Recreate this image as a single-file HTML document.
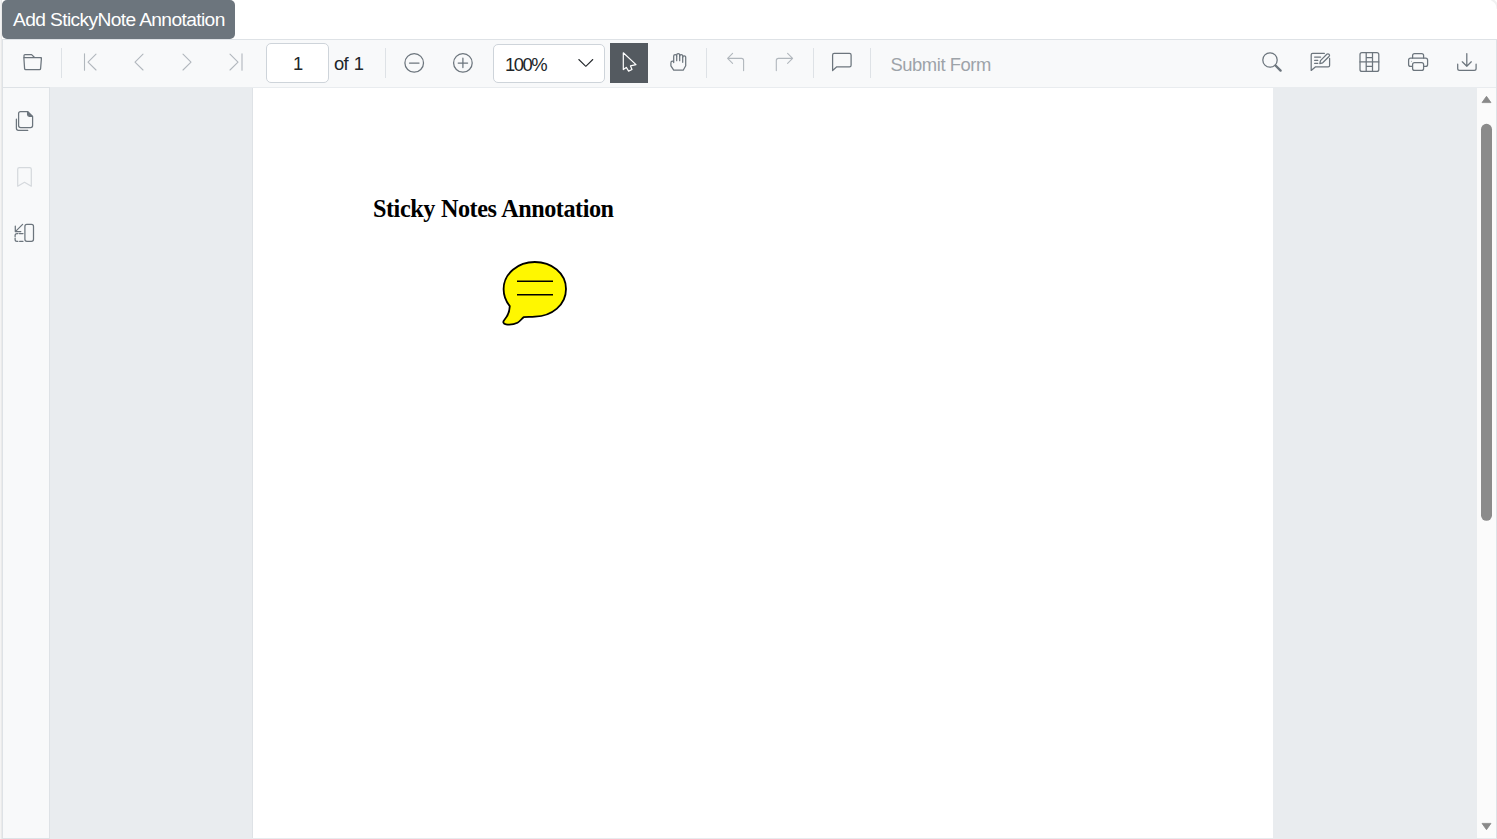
<!DOCTYPE html>
<html><head><meta charset="utf-8">
<style>
html,body{margin:0;padding:0;}
body{width:1497px;height:839px;overflow:hidden;position:relative;background:#ffffff;font-family:"Liberation Sans",sans-serif;}
.abs{position:absolute;}
#leftstrip{left:0;top:0;width:2px;height:839px;background:linear-gradient(90deg,#f4f4f4 0,#f4f4f4 1px,#eaeaea 1px,#eaeaea 2px);}
#btn{left:2px;top:0;width:233px;height:39px;background:#6c757d;border-radius:5px;color:#fff;}
#btn span{position:absolute;left:11px;top:10px;font-size:19.2px;line-height:20px;letter-spacing:-0.62px;white-space:nowrap;}
#viewer{left:2px;top:39px;width:1495px;height:800px;border:1px solid #dee2e6;border-bottom-color:#e8ebee;box-sizing:border-box;background:#e9ecef;}
#sbbottom{left:2px;top:838px;width:48px;height:1px;background:#dee2e6;}
#toolbar{left:3px;top:40px;width:1493px;height:47px;background:#f8f9fa;}
#sidebar{left:3px;top:87px;width:46px;height:750px;background:#f8f9fa;border-right:1px solid #dee2e6;border-top:1px solid #dee2e6;}
#page{left:253px;top:88px;width:1020px;height:750px;background:#fff;}
#pageborder{left:252px;top:88px;width:1px;height:750px;background:#dee2e6;}
#scroll{left:1477px;top:88px;width:19px;height:750px;background:#fbfbfb;}
.sep{position:absolute;top:48px;width:1px;height:30px;background:#dee2e6;}
svg.ic{position:absolute;overflow:visible;}
.txt{position:absolute;white-space:nowrap;font-size:18.4px;line-height:20px;}
</style></head>
<body>
<div id="leftstrip" class="abs"></div>
<div id="btn" class="abs"><span>Add StickyNote Annotation</span></div>
<div id="viewer" class="abs"></div>
<div id="toolbar" class="abs"></div>
<div id="sidebar" class="abs"></div>
<div id="sbbottom" class="abs"></div>
<div id="pageborder" class="abs"></div>
<div id="page" class="abs"></div>
<div id="scroll" class="abs"></div>

<!-- separators -->
<div class="sep" style="left:61px"></div>
<div class="sep" style="left:385px"></div>
<div class="sep" style="left:706px"></div>
<div class="sep" style="left:813px"></div>
<div class="sep" style="left:870px"></div>

<!-- page input -->
<div class="abs" style="left:266px;top:43px;width:63px;height:40px;box-sizing:border-box;border:1px solid #ced4da;border-radius:5px;background:#fff;"></div>
<div class="txt" style="left:293px;top:54px;color:#212529;">1</div>
<div class="txt" style="left:334px;top:54px;color:#212529;letter-spacing:-0.7px;word-spacing:1.5px;">of 1</div>

<!-- zoom dropdown -->
<div class="abs" style="left:493px;top:44px;width:112px;height:39px;box-sizing:border-box;border:1px solid #ced4da;border-radius:5px;background:#fff;"></div>
<div class="txt" style="left:505px;top:55px;color:#212529;letter-spacing:-1.5px;">100%</div>

<!-- selected button -->
<div class="abs" style="left:610px;top:43px;width:38px;height:40px;background:#545a60;"></div>

<div class="txt" style="left:890.5px;top:55px;color:#9da3a9;letter-spacing:-0.45px;">Submit Form</div>

<!-- page title -->
<div class="abs" style="left:373px;top:194px;font-family:'Liberation Serif',serif;font-weight:bold;font-size:24.2px;line-height:30px;letter-spacing:-0.45px;word-spacing:0.5px;color:#000;white-space:nowrap;">Sticky Notes Annotation</div>


<svg class="abs" style="left:0;top:0" width="1497" height="839" viewBox="0 0 1497 839">
<g fill="none" stroke="#6c757d" stroke-width="1.25" stroke-linecap="round" stroke-linejoin="round">
 <!-- folder -->
 <path d="M24,57.5 H40.8"/>
 <path d="M24,57.5 V55.6 Q24,54.6 25,54.6 H31.6 L34.3,57.3"/>
 <path d="M23.9,58.3 L24.6,68.6 Q24.7,69.6 25.7,69.6 H39.5 Q40.5,69.6 40.6,68.6 L41.4,58.6 Q41.5,57.5 40.4,57.5"/>
 <!-- zoom out / in -->
 <circle cx="414.2" cy="62.9" r="9.3"/>
 <path d="M409.5,63 H419"/>
 <circle cx="462.9" cy="62.9" r="9.3"/>
 <path d="M458.2,63 H467.6 M462.9,58.2 V67.6"/>
 <!-- hand -->
 <path d="M673.7,62.6 V56.1 A1.5,1.5 0 0 1 676.7,56.1 V55.1 A1.5,1.5 0 0 1 679.7,55.1 V56.1 A1.5,1.5 0 0 1 682.7,56.1 V57.3 A1.5,1.5 0 0 1 685.7,57.3 V65.8 L683.2,70.2 H673.7 L670.9,65.8 V62.9 Q670.9,61.2 672.4,61.2 Q673.7,61.2 673.7,62.6 Z"/>
 <path d="M676.7,56.1 V60.7 M679.7,55.1 V60.7 M682.7,57.3 V62.3"/>
 <!-- comment -->
 <path d="M832.6,70.5 V55 Q832.6,53.4 834.2,53.4 H849.5 Q851.1,53.4 851.1,55 V65.2 Q851.1,66.8 849.5,66.8 H836.8 Z"/>
 <!-- search -->
 <circle cx="1270" cy="60" r="7.2"/>
 <path d="M1275.5,65.5 L1280.6,70.6" stroke-width="2.4"/>
 <!-- annotation edit -->
 <path d="M1324.4,53.3 H1312.6 Q1311.2,53.3 1311.2,54.7 V70.4 L1315.3,66.9 H1328.2 Q1329.6,66.9 1329.6,65.5 V58.4"/>
 <path d="M1314.6,57.1 H1320.6 M1314.6,60.3 H1317.8 M1314.6,63.3 H1317.8"/>
 <path d="M1319.8,63.6 L1320.5,60.6 L1326.8,54.3 Q1327.9,53.2 1329,54.3 Q1330.1,55.4 1329,56.5 L1322.7,62.8 Z"/>
 <!-- table -->
 <rect x="1360" y="52.6" width="18.8" height="18.8" rx="2"/>
 <path d="M1366.2,52.6 V71.4 M1372.5,52.6 V71.4 M1360,61.9 H1378.8 M1366.2,57.6 H1372.5 M1366.2,66.4 H1372.5"/>
 <!-- print -->
 <path d="M1412.6,58 V55.6 Q1412.6,53.6 1414.6,53.6 H1421.6 Q1423.6,53.6 1423.6,55.6 V58"/>
 <path d="M1412.3,66.4 H1410.6 Q1408.6,66.4 1408.6,64.4 V60.2 Q1408.6,58.2 1410.6,58.2 H1425.6 Q1427.6,58.2 1427.6,60.2 V64.4 Q1427.6,66.4 1425.6,66.4 H1423.9"/>
 <rect x="1412.6" y="62.6" width="11" height="7.8" rx="2"/>
 <circle cx="1411.4" cy="61.3" r="0.45" fill="#6c757d" stroke="none"/>
 <!-- download -->
 <path d="M1466.8,53.5 V66.3 M1462.3,61.8 L1466.8,66.3 L1471.3,61.8"/>
 <path d="M1457.7,64.2 V68.5 Q1457.7,70.4 1459.6,70.4 H1474.2 Q1476.1,70.4 1476.1,68.5 V64.2"/>
 <!-- sidebar thumbnails -->
 <path d="M20.6,111.5 H27.6 L32.6,116.5 V125.6 Q32.6,127.6 30.6,127.6 H20.6 Q18.6,127.6 18.6,125.6 V113.5 Q18.6,111.5 20.6,111.5 Z"/>
 <path d="M27.6,111.8 V114.5 Q27.6,116.3 29.4,116.3 H32.3" />
 <path d="M16.4,119 V128.3 Q16.4,130.3 18.4,130.3 H27.8"/>
 <!-- organize -->
 <rect x="24.9" y="224.4" width="8.6" height="16.9" rx="2"/>
 <path d="M22.6,224.4 L15.6,231.4 M15.3,226 V231.5 H20.8"/>
 <path d="M17.9,233.5 H17 Q15.1,233.5 15.1,235.4 V236.6 M15.1,238 V239.4 Q15.1,241.3 17,241.3 H17.9 M19.4,233.5 H23 M19.6,241.3 H23"/>
</g>
<path d="M27.6,111.8 L32.3,116.4 H29.4 Q27.6,116.4 27.6,114.6 Z" fill="#6c757d"/>
<!-- disabled nav -->
<g fill="none" stroke="#b1b7bd" stroke-width="1.1" stroke-linecap="round" stroke-linejoin="round">
 <path d="M84.5,53.8 V70.2 M96,54.2 L88,62.1 L96,70"/>
 <path d="M143,54.2 L135,62.1 L143,70"/>
 <path d="M183,54.2 L191,62.1 L183,70"/>
 <path d="M230,54.2 L238,62.1 L230,70 M242,53.8 V70.2"/>
 <!-- undo redo -->
 <path d="M732.6,53.4 L727.6,58.4 L732.6,63.4 M728,58.4 H741.5 Q743.6,58.4 743.6,60.5 V70.6"/>
 <path d="M787.6,53.4 L792.6,58.4 L787.6,63.4 M792.2,58.4 H778.4 Q776.3,58.4 776.3,60.5 V70.6"/>
</g>
<!-- bookmark disabled -->
<path d="M17.7,186.2 V169.3 Q17.7,167.6 19.4,167.6 H29.6 Q31.3,167.6 31.3,169.3 V186.2 L24.5,182.3 Z" fill="none" stroke="#d5d9dd" stroke-width="1.25" stroke-linejoin="round"/>
<!-- dropdown chevron -->
<path d="M578.8,59.5 L585.8,66.3 L592.8,59.5" fill="none" stroke="#212529" stroke-width="1.05" stroke-linecap="round" stroke-linejoin="round"/>
<!-- cursor in selected -->
<path d="M623.3,52.8 V69.6 L626.3,67.4 L628.6,71.1 L632,69.5 L630.5,65.9 L636,64.6 Z" fill="none" stroke="#ffffff" stroke-width="1.2" stroke-linejoin="round"/>
<!-- scrollbar -->
<path d="M1486.5,96.3 L1491,102.6 H1482 Z" fill="#898989" stroke="#898989" stroke-width="0.8" stroke-linejoin="round"/>
<path d="M1482,823.4 H1491 L1486.5,829.7 Z" fill="#898989" stroke="#898989" stroke-width="0.8" stroke-linejoin="round"/>
<rect x="1481" y="123.8" width="11" height="397" rx="5.5" fill="#8b8b8b"/>
<path d="M1491.5,-0.5 A10,10 0 0 1 1497.5,9" fill="none" stroke="#f1f1f1" stroke-width="2"/>
<!-- sticky note -->
<path d="M509.8,306.1 C509.6,310.5 507.5,316.5 504.3,320 C502.6,322 503.2,323.9 506,324.3 C509.5,324.8 513.5,324.6 517.5,322.7 C520,321.5 521.8,318.6 523.6,317.2 C527,316.9 530,317 535,316.7 C552,316 566,305 566,289 C566,273 551.5,262 534.8,262 C518,262 503.6,273.5 503.6,289 C503.6,296 506.2,301.8 509.8,306.1 Z" fill="#fff700" stroke="#000" stroke-width="1.8" stroke-linejoin="round"/>
<path d="M517,281.3 H553 M517,294.7 H553" stroke="#000" stroke-width="1.5"/>
</svg>
</body></html>
